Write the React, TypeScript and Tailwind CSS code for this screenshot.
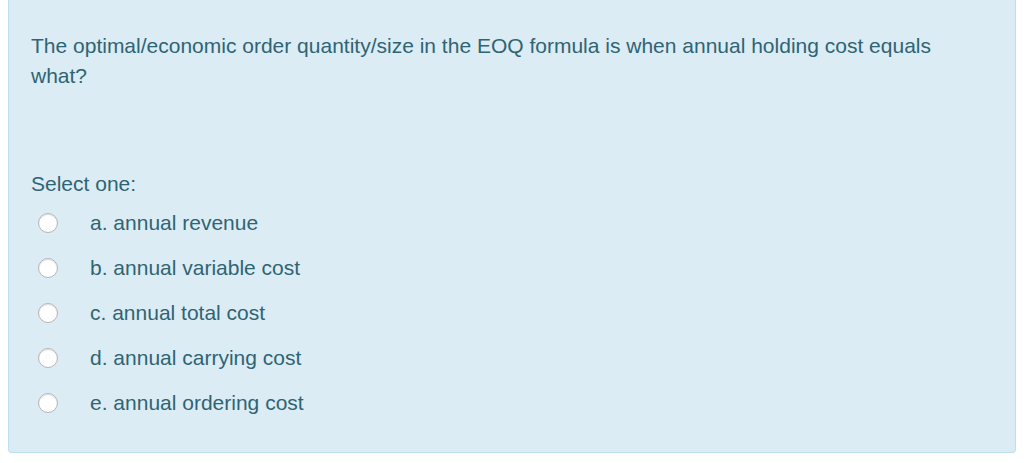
const options = [
  'a. annual revenue',
  'b. annual variable cost',
  'c. annual total cost',
  'd. annual carrying cost',
  'e. annual ordering cost',
]

const App = () => {
  return (
    <div className="min-h-[463px] bg-white px-2 font-['Liberation_Sans',Arial,sans-serif]">
      <div className="rounded-b border border-t-0 border-[#bce1ef] bg-[#dcecf5] pl-[22px] pr-6 pt-[31px] pb-[27px] text-[#2f6473]">
        <p className="max-w-[935px] text-[21px] leading-[30px]">
          The optimal/economic order quantity/size in the EOQ formula is when annual holding cost equals what?
        </p>
        <p className="mt-[78px] text-[21px] leading-[30px]">Select one:</p>
        <div className="mt-[1px] flex flex-col">
          {options.map((o) => (
            <label key={o} className="flex h-[45px] items-center">
              <span className="ml-[7px] h-[20px] w-[20px] rounded-full border border-[#b5b5b5] bg-white shadow-[inset_0_1px_1px_rgba(0,0,0,0.12)]" />
              <span className="ml-[32px] text-[21px]">{o}</span>
            </label>
          ))}
        </div>
      </div>
    </div>
  )
}

export default App
